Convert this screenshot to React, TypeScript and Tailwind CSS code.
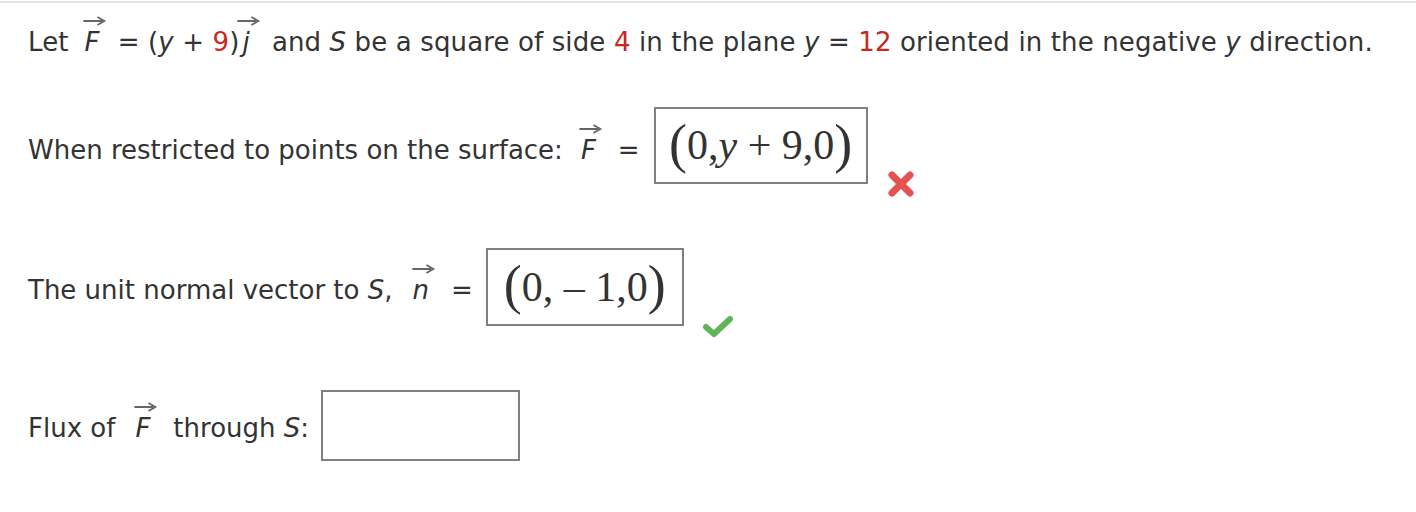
import React from 'react';

const textFont = { fontFamily: '"DejaVu Sans", Verdana, sans-serif' };

// Letter with a small vector arrow drawn above it
const Vec: React.FC<{ letter: string; className?: string }> = ({ letter, className }) => (
    <span className={`relative inline-block italic ${className ?? ''}`}>
        {letter}
        <svg
            className="absolute left-1/2 -translate-x-[40%] -top-[8px]"
            width="24"
            height="12"
            viewBox="0 0 24 12"
        >
            <line x1="1" y1="6" x2="20" y2="6" stroke="#666" strokeWidth="2.2" />
            <path d="M15 2 L22 6 L15 10" fill="none" stroke="#666" strokeWidth="1.8" />
        </svg>
    </span>
);

const CrossMark = () => (
    <svg width="28" height="28" viewBox="0 0 28 28">
        <path d="M5 5 L23 23 M23 5 L5 23" stroke="#e35353" strokeWidth="7" strokeLinecap="round" />
    </svg>
);

const CheckMark = () => (
    <svg width="32" height="24" viewBox="0 0 32 24">
        <path d="M4 13 L12 20 L28 5" fill="none" stroke="#5fb55a" strokeWidth="6" strokeLinecap="round" strokeLinejoin="round" />
    </svg>
);

const MathBox: React.FC<{ className: string; children?: React.ReactNode }> = ({ className, children }) => (
    <div
        className={`flex items-center justify-center border-2 border-[#808080] bg-white text-[#333] ${className}`}
        style={{ fontFamily: '"Liberation Serif", "Times New Roman", serif' }}
    >
        {children}
    </div>
);

const App: React.FC = () => {
    return (
        <div className="w-[1416px] h-[512px] bg-white text-[#333] overflow-hidden" style={textFont}>
            <div className="h-[3px] border-t-2 border-[#e2e2e2] mt-[1px]" />
            <div className="pl-[28px] text-[26px]">
                {/* intro sentence */}
                <div className="mt-[20px] h-[36px] flex items-center whitespace-nowrap tracking-[0.13px]">
                    <span>Let</span>
                    <Vec letter="F" className="ml-[16px] mr-[18px]" />
                    <span>= (<i>y</i> + <span className="text-[#c8281e]">9</span>)</span>
                    <Vec letter="j" className="ml-[3px] mr-[22px]" />
                    <span>and <i>S</i> be a square of side <span className="text-[#c8281e]">4</span> in the plane <i>y</i> = <span className="text-[#c8281e]">12</span> oriented in the negative <i>y</i> direction.</span>
                </div>

                {/* F restricted to surface */}
                <div className="mt-[47px] flex items-center whitespace-nowrap">
                    <span className="pt-[9px]">
                        <span>When restricted to points on the surface:</span>
                        <Vec letter="F" className="ml-[18px] mr-[22px]" />
                        <span className="mr-[14px]">=</span>
                    </span>
                    <MathBox className="w-[214px] h-[77px] text-[42px]">
                        <span className="text-[54px] leading-none -mt-[4px] font-light">(</span>
                        <span>0,<i>y</i>&nbsp;+&nbsp;9,0</span>
                        <span className="text-[54px] leading-none -mt-[4px] font-light">)</span>
                    </MathBox>
                    <div className="self-end translate-y-1/2 ml-[19px]">
                        <CrossMark />
                    </div>
                </div>

                {/* unit normal */}
                <div className="mt-[64px] flex items-center whitespace-nowrap">
                    <span className="pt-[6px]">
                        <span>The unit normal vector to <i>S</i>,</span>
                        <Vec letter="n" className="ml-[20px] mr-[22px]" />
                        <span className="mr-[13px]">=</span>
                    </span>
                    <MathBox className="w-[198px] h-[78px] text-[42px]">
                        <span className="text-[54px] leading-none -mt-[4px] font-light">(</span>
                        <span>0,&nbsp;&ndash;&nbsp;1,0</span>
                        <span className="text-[54px] leading-none -mt-[4px] font-light">)</span>
                    </MathBox>
                    <div className="self-end translate-y-1/2 ml-[18px]">
                        <CheckMark />
                    </div>
                </div>

                {/* flux */}
                <div className="mt-[64px] flex items-center whitespace-nowrap">
                    <span className="pt-[6px]">
                        <span>Flux of</span>
                        <Vec letter="F" className="ml-[20px] mr-[23px]" />
                        <span className="mr-[12px]">through <i>S</i>:</span>
                    </span>
                    <MathBox className="w-[199px] h-[71px]" />
                </div>
            </div>
        </div>
    );
};

export default App;
